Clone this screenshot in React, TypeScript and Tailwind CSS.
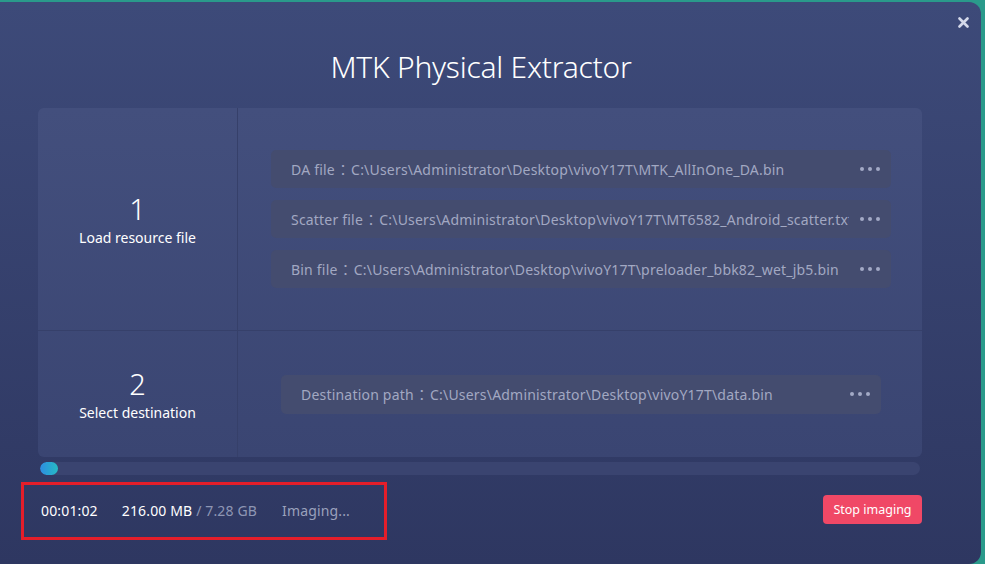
import React from "react";

const font = { fontFamily: '"Noto Sans", "Liberation Sans", "Noto Sans CJK SC", sans-serif' };
const colonFont = { fontFamily: '"Noto Sans CJK TC", sans-serif' };

function Dots() {
  return (
    <div className="flex items-center gap-[4px] ml-[11px] mr-[11px] shrink-0">
      <span className="w-[4px] h-[4px] rounded-full bg-[#a3aac6]" />
      <span className="w-[4px] h-[4px] rounded-full bg-[#a3aac6]" />
      <span className="w-[4px] h-[4px] rounded-full bg-[#a3aac6]" />
    </div>
  );
}

function Field({ label, value, h = "h-[38px]" }: { label: string; value: string; h?: string }) {
  return (
    <div className={`flex items-center ${h} rounded-[5px] bg-[#444c6f] pl-[20px]`}>
      <div className="flex-1 min-w-0 overflow-hidden whitespace-nowrap text-[14px] tracking-[0.2px] text-[#a2a8c2]">
        {label}
        <span style={colonFont} className="mx-[1px]">：</span>
        {value}
      </div>
      <Dots />
    </div>
  );
}

export default function App() {
  return (
    <div className="w-[985px] h-[564px] overflow-hidden bg-[#2a9a8b] pt-[2px] pr-[4px]" style={font}>
      <div className="relative w-full h-full rounded-tr-[12px] rounded-br-[12px] bg-gradient-to-b from-[#3d4a79] to-[#2e3761] flex flex-col">
        <button className="absolute top-[14px] right-[12px] w-[12px] h-[12px] flex items-center justify-center">
          <svg width="11" height="11" viewBox="0 0 11 11">
            <path d="M1.5 1.5 L9.5 9.5 M9.5 1.5 L1.5 9.5" stroke="#d4d9ea" strokeWidth="2.6" strokeLinecap="round" />
          </svg>
        </button>

        <div className="h-[106px] flex items-start justify-center pt-[45px] pr-[19px]">
          <h1 className="text-[30px] leading-[40px] font-light text-white tracking-[-0.25px]">MTK Physical Extractor</h1>
        </div>

        <div className="ml-[38px] w-[884px] h-[349px] rounded-[6px] bg-gradient-to-b from-[#434f7d] to-[#3a4572] grid grid-cols-[200px_684px] grid-rows-[222px_127px]">
          <div className="flex flex-col items-center justify-center text-white border-r border-[#36406a] pt-[2px]">
            <div className="text-[29px] leading-[34px] font-light">1</div>
            <div className="text-[14px] leading-[20px] mt-[2px]">Load resource file</div>
          </div>
          <div className="min-w-0 flex flex-col justify-center gap-[12px] pl-[33px] pr-[31px]">
            <Field label="DA file" value="C:\Users\Administrator\Desktop\vivoY17T\MTK_AllInOne_DA.bin" />
            <Field label="Scatter file" value="C:\Users\Administrator\Desktop\vivoY17T\MT6582_Android_scatter.txt" />
            <Field label="Bin file" value="C:\Users\Administrator\Desktop\vivoY17T\preloader_bbk82_wet_jb5.bin" />
          </div>
          <div className="border-t border-r border-[#36406a] flex flex-col items-center justify-center text-white pt-[1px]">
            <div className="text-[29px] leading-[34px] font-light">2</div>
            <div className="text-[14px] leading-[20px] mt-[2px]">Select destination</div>
          </div>
          <div className="min-w-0 border-t border-[#36406a] flex flex-col justify-center pl-[43px] pr-[41px]">
            <Field h="h-[39px]" label="Destination path" value="C:\Users\Administrator\Desktop\vivoY17T\data.bin" />
          </div>
        </div>

        <div className="ml-[40px] w-[880px] h-[13px] mt-[5px] rounded-full bg-[#3a4470] overflow-hidden">
          <div className="h-full rounded-full bg-gradient-to-r from-[#2f8ce0] to-[#27bac3]" style={{ width: 18 }} />
        </div>

        <div className="ml-[21px] w-[901px] mt-[7px] flex items-start justify-between">
          <div className="w-[366px] h-[58px] border-[3px] border-[#e41e2a] flex items-center pl-[17px] pb-[2px] text-[14px] tracking-[0.15px]">
            <span className="text-white">00:01:02</span>
            <span className="ml-[24px] text-white">216.00 MB</span>
            <span className="text-[#8e96b4]">&nbsp;/ 7.28 GB</span>
            <span className="ml-[25px] text-[#9aa1bc]">Imaging...</span>
          </div>
          <button className="mt-[13px] w-[99px] h-[29px] pt-[2px] rounded-[4px] bg-[#f04866] text-white text-[12.5px] flex items-center justify-center">
            Stop imaging
          </button>
        </div>
      </div>
    </div>
  );
}
